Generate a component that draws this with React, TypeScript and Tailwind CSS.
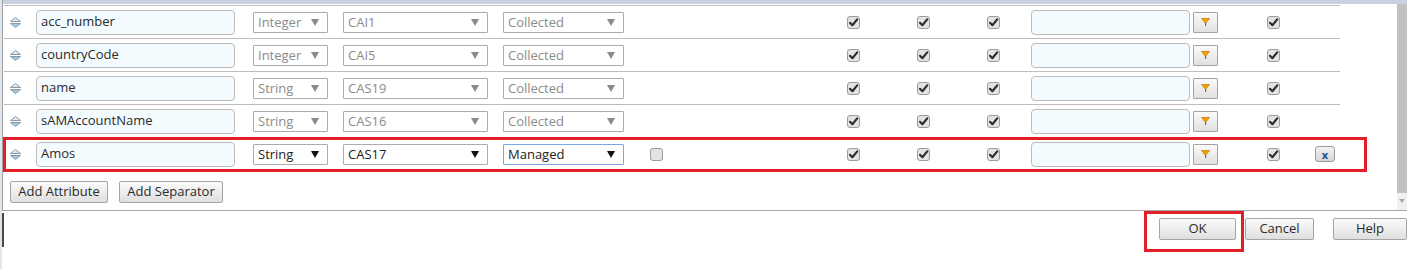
import React from "react";

type Attr = {
  name: string;
  type: string;
  cai: string;
  status: string;
  editable?: boolean;
};

const rows: Attr[] = [
  { name: "acc_number", type: "Integer", cai: "CAI1", status: "Collected" },
  { name: "countryCode", type: "Integer", cai: "CAI5", status: "Collected" },
  { name: "name", type: "String", cai: "CAS19", status: "Collected" },
  { name: "sAMAccountName", type: "String", cai: "CAS16", status: "Collected" },
  { name: "Amos", type: "String", cai: "CAS17", status: "Managed", editable: true },
];

const SortIcon = () => (
  <svg width="11" height="11" viewBox="0 0 11 11" className="block">
    <path d="M5.5 0.5 L10.5 4.5 L0.5 4.5 Z" fill="#d9ebf7" stroke="#8b98a3" strokeWidth="1" />
    <path d="M0.5 6.5 L10.5 6.5 L5.5 10.5 Z" fill="#9fcbe9" stroke="#8b98a3" strokeWidth="1" />
  </svg>
);

const Check = ({ checked = true }: { checked?: boolean }) => (
  <svg width="13" height="13" viewBox="0 0 13 13" className="block shrink-0">
    <rect x="0.5" y="0.5" width="12" height="12" rx="2.5" fill="#e3e3e3" stroke="#9c9c9c" />
    {checked && (
      <path d="M3 6.8 L5.4 9.2 L10.2 3.4" fill="none" stroke="#2e2e2e" strokeWidth="2.2" strokeLinecap="round" strokeLinejoin="round" />
    )}
  </svg>
);

const Arrow = ({ dark }: { dark?: boolean }) => (
  <svg width="8" height="7" viewBox="0 0 8 7" className="block">
    <path d="M0 0 L8 0 L4 7 Z" fill={dark ? "#111" : "#8a8a8a"} />
  </svg>
);

const Select = ({
  value,
  width,
  dark,
  focus,
}: {
  value: string;
  width: string;
  dark?: boolean;
  focus?: boolean;
}) => (
  <div
    className={`${width} h-[21px] flex items-center justify-between pl-[4px] pr-[8px] bg-white border rounded-[1px] text-[13px] ${
      focus ? "border-[#7ea6e3]" : "border-[#acacac]"
    } ${dark ? "text-[#222]" : "text-[#8b8b8b]"}`}
  >
    <span className="leading-none">{value}</span>
    <Arrow dark={dark} />
  </div>
);

const FilterIcon = () => (
  <svg width="9" height="9" viewBox="0 0 9 9" className="block">
    <path d="M0.5 0.5 L8.5 0.5 L4.5 5.5 Z" fill="#f4a100" stroke="#c98000" strokeWidth="0.8" />
    <rect x="4" y="5" width="1.2" height="3" fill="#6b6b6b" />
  </svg>
);

const Row = ({ a }: { a: Attr }) => (
  <div className="relative flex items-center h-[33px] w-[1336px] ml-px border-t border-[#bdbdbd]">
    <div className="ml-[6px]">
      <SortIcon />
    </div>
    <div className="ml-[15px] w-[199px] h-[25px] flex items-center pl-[4px] bg-[#f3fbff] border border-[#bcbcbc] rounded-[4px] text-[13px] text-[#2a2a2a]">
      {a.name}
    </div>
    <div className="ml-[18px]">
      <Select value={a.type} width="w-[75px]" dark={a.editable} />
    </div>
    <div className="ml-[15px]">
      <Select value={a.cai} width="w-[145px]" dark={a.editable} />
    </div>
    <div className="ml-[15px]">
      <Select value={a.status} width="w-[121px]" dark={a.editable} focus={a.editable} />
    </div>
    <div className="ml-[26px] w-[13px]">{a.editable && <Check checked={false} />}</div>
    <div className="ml-[184px]">
      <Check />
    </div>
    <div className="ml-[57px]">
      <Check />
    </div>
    <div className="ml-[57px]">
      <Check />
    </div>
    <div className="ml-[31px] w-[159px] h-[25px] bg-[#f3fbff] border border-[#bcbcbc] rounded-[4px]" />
    <div className="ml-[3px] w-[25px] h-[21px] flex items-center justify-center border border-[#a3a3a3] rounded-[1px] bg-linear-to-b from-[#fafafa] to-[#e1e1e1]">
      <FilterIcon />
    </div>
    <div className="ml-[49px]">
      <Check />
    </div>
    {a.editable && (
      <div className="ml-[35px] w-[20px] h-[16px] flex items-center justify-center border border-[#9a9a9a] rounded-[3px] bg-linear-to-b from-[#f2f2f2] to-[#d6d6d6] text-[11px] font-bold text-[#1d4f8c] leading-none">
        x
      </div>
    )}
    {a.editable && (
      <div className="absolute left-[-1px] top-[-1px] w-[1364px] h-[35px] border-[3px] border-[#e31e26] pointer-events-none" />
    )}
  </div>
);

const Btn = ({ label, w }: { label: string; w: string }) => (
  <div
    className={`${w} h-[22px] flex items-center justify-center border border-[#a5a5a5] rounded-[2px] bg-linear-to-b from-[#fbfbfb] to-[#dfdfdf] text-[13px] text-[#2a2a2a]`}
  >
    {label}
  </div>
);

export default function App() {
  return (
    <div
      className="flex w-[1418px] h-[269px] bg-white overflow-hidden"
      style={{ fontFamily: '"Open Sans", "Liberation Sans", sans-serif' }}
    >
      <div className="w-[2px] bg-[#dde5ef]" />
      <div className="flex flex-col">
        <div className="w-[1405px] h-[210px] border-l border-[#a3a3a3] flex flex-col">
          <div className="h-[4px] bg-[#c8d2e3]" />
          <div className="flex flex-1">
            <div className="flex-1 pt-px">
              {rows.map((r) => (
                <Row key={r.name} a={r} />
              ))}
              <div className="flex gap-[11px] ml-[7px] mt-[11px]">
                <Btn label="Add Attribute" w="w-[98px]" />
                <Btn label="Add Separator" w="w-[104px]" />
              </div>
            </div>
            <div className="w-[10px] flex flex-col bg-[#f1f1f1]">
              <div className="h-[189px] bg-[#c1c1c1]" />
              <div className="flex-1 flex items-start justify-center pt-[6px]">
                <svg width="6" height="4" viewBox="0 0 6 4">
                  <path d="M0 0 L6 0 L3 4 Z" fill="#a8a8a8" />
                </svg>
              </div>
            </div>
          </div>
        </div>
        <div className="w-[1405px] h-px bg-[#a9a9a9]" />
        <div className="flex w-[1405px]">
          <div className="w-[1.5px] h-[34px] mt-[2px] bg-[#4a4a4a]" />
          <div className="flex-1 flex justify-end pt-[7px]">
            <div className="relative">
              <Btn label="OK" w="w-[77px]" />
              <div className="absolute left-[-15px] top-[-7px] w-[100px] h-[41px] border-[3px] border-[#e31e26]" />
            </div>
            <div className="ml-[9px]">
              <Btn label="Cancel" w="w-[69px]" />
            </div>
            <div className="ml-[19px]">
              <Btn label="Help" w="w-[74px]" />
            </div>
          </div>
        </div>
      </div>
    </div>
  );
}
